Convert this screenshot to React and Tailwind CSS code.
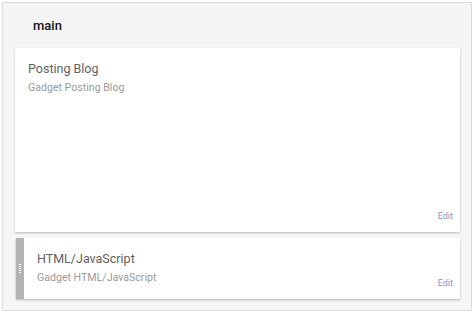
export default function App() {
  const font = { fontFamily: 'Roboto, "Liberation Sans", Arial, sans-serif' };
  return (
    <div className="w-[474px] h-[314px] bg-white pt-[2px] pl-[2px] pr-[2px] pb-[3px]" style={font}>
      <div className="w-[470px] h-[309px] border border-[#dcdcdc] bg-[#f5f5f5] flex flex-col">
        <div className="h-[45px] flex items-center pl-[30px] shrink-0">
          <span className="text-[13px] font-medium text-[#111] leading-none">main</span>
        </div>
        <div className="ml-[12px] mr-[11px] h-[184px] bg-white shadow-[0_1px_2px_rgba(0,0,0,0.25)] flex flex-col pl-[13px] pr-[7px] pt-[13px] pb-[10px]">
          <div className="text-[12.5px] leading-[16px] text-[#5f5f5f]">Posting Blog</div>
          <div className="mt-[4px] text-[10.6px] leading-[14px] text-[#9a9a9a]">Gadget Posting Blog</div>
          <div className="mt-auto self-end text-[9px] leading-[12px] text-[#8797c8]">Edit</div>
        </div>
        <div className="ml-[13px] mr-[11px] mt-[6px] h-[61px] flex shadow-[0_1px_2px_rgba(0,0,0,0.25)]">
          <div className="w-[8px] bg-[#b3b3b3] flex flex-col items-center justify-center gap-[1px]">
            <span className="w-[2px] h-[1px] bg-white" />
            <span className="w-[2px] h-[1px] bg-white" />
            <span className="w-[2px] h-[1px] bg-white" />
            <span className="w-[2px] h-[1px] bg-white" />
            <span className="w-[2px] h-[1px] bg-white" />
          </div>
          <div className="flex-1 bg-white flex flex-col pl-[13px] pr-[7px] pt-[13px]">
            <div className="text-[12.5px] leading-[16px] text-[#5f5f5f]">HTML/JavaScript</div>
            <div className="mt-[4px] flex justify-between items-start">
              <div className="text-[10.6px] leading-[14px] text-[#9a9a9a]">Gadget HTML/JavaScript</div>
              <div className="mt-[6px] text-[9px] leading-[12px] text-[#8797c8]">Edit</div>
            </div>
          </div>
        </div>
      </div>
    </div>
  );
}
